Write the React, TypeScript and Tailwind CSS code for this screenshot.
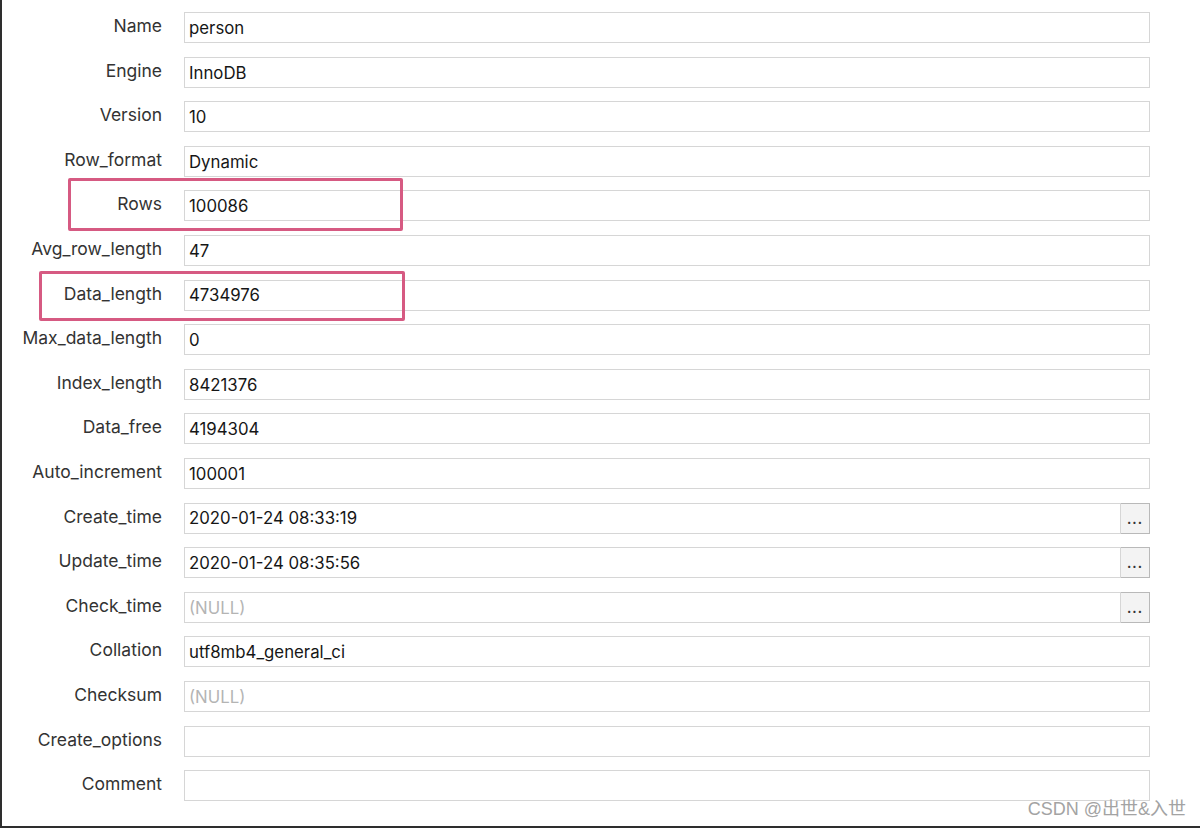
type Field = { label: string; value?: string; placeholder?: string; picker?: boolean };

const fields: Field[] = [
  { label: "Name", value: "person" },
  { label: "Engine", value: "InnoDB" },
  { label: "Version", value: "10" },
  { label: "Row_format", value: "Dynamic" },
  { label: "Rows", value: "100086" },
  { label: "Avg_row_length", value: "47" },
  { label: "Data_length", value: "4734976" },
  { label: "Max_data_length", value: "0" },
  { label: "Index_length", value: "8421376" },
  { label: "Data_free", value: "4194304" },
  { label: "Auto_increment", value: "100001" },
  { label: "Create_time", value: "2020-01-24 08:33:19", picker: true },
  { label: "Update_time", value: "2020-01-24 08:35:56", picker: true },
  { label: "Check_time", placeholder: "(NULL)", picker: true },
  { label: "Collation", value: "utf8mb4_general_ci" },
  { label: "Checksum", placeholder: "(NULL)" },
  { label: "Create_options", value: "" },
  { label: "Comment", value: "" },
];

function FieldRow({ field }: { field: Field }) {
  return (
    <div className="flex h-[44.6px] items-start">
      <div className="w-[160px] shrink-0 text-right text-[17.5px] leading-[27px] text-[#333]">
        {field.label}
      </div>
      <div className="ml-[22px] mr-[50px] flex h-[31px] flex-1">
        <div className="flex h-full flex-1 items-center border border-[#d6d6d6] bg-white pl-[4px] pt-[2px] text-[16.8px]">
          {field.value ? (
            <span className="text-[#161616]">{field.value}</span>
          ) : field.placeholder ? (
            <span className="text-[#b4b4b4]">{field.placeholder}</span>
          ) : null}
        </div>
        {field.picker && (
          <button
            type="button"
            className="flex h-full w-[29px] shrink-0 items-end justify-center border border-l-0 border-[#b9b9b9] bg-[#f3f3f3] pb-[7px] text-[13px] font-bold leading-none tracking-[1px] text-[#333]"
          >
            ...
          </button>
        )}
      </div>
    </div>
  );
}

export default function App() {
  return (
    <div
      className="relative h-[828px] w-[1200px] overflow-hidden border-b-[2px] border-l-[2px] border-[#2e2e2e] bg-white"
      style={{ fontFamily: 'Inter, "Liberation Sans", Arial, sans-serif' }}
    >
      <div className="flex flex-col pt-[12px]">
        {fields.map((f) => (
          <FieldRow key={f.label} field={f} />
        ))}
      </div>

      {/* highlight boxes */}
      <div className="absolute left-[66px] top-[178px] h-[53px] w-[335px] rounded-[2px] border-[3px] border-[#d65a82]" />
      <div className="absolute left-[37px] top-[271px] h-[50px] w-[366px] rounded-[2px] border-[3px] border-[#d65a82]" />

      <div
        className="absolute bottom-[8px] right-[14px] text-[18px] leading-none text-[#a3a3a3]"
        style={{ fontFamily: '"Liberation Sans", "Noto Sans CJK SC", sans-serif' }}
      >
        CSDN @出世&amp;入世
      </div>
    </div>
  );
}
